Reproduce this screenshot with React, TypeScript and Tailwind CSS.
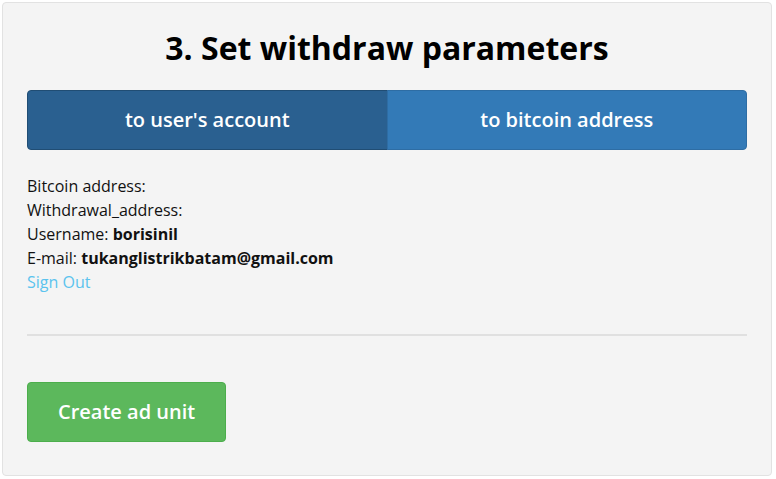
import React, { useState } from 'react';

export default function App() {
  const [mode, setMode] = useState<'account' | 'bitcoin'>('account');

  return (
    <div className="min-h-screen bg-white pl-[2px] pt-[2px] font-['Open_Sans',sans-serif] text-[#111]">
      <div className="w-[770px] h-[474px] bg-[#f4f4f4] border border-[#e2e2e2] rounded-[4px] px-[24px]">
        <h2 className="text-center text-[32px] font-bold text-black leading-none pt-[29px] pb-[26px]">
          3. Set withdraw parameters
        </h2>

        {/* Withdraw mode toggle */}
        <div className="flex h-[60px]">
          <button
            onClick={() => setMode('account')}
            className={
              mode === 'account'
                ? 'flex-1 rounded-l-[4px] bg-[#2a6090] border border-[#204d74] text-white text-[20px] font-semibold'
                : 'flex-1 rounded-l-[4px] bg-[#337ab7] border border-[#2e6da4] text-white text-[20px] font-semibold'
            }
          >
            to user's account
          </button>
          <button
            onClick={() => setMode('bitcoin')}
            className={
              mode === 'bitcoin'
                ? 'flex-1 rounded-r-[4px] bg-[#2a6090] border border-[#204d74] -ml-px text-white text-[20px] font-semibold'
                : 'flex-1 rounded-r-[4px] bg-[#337ab7] border border-[#2e6da4] -ml-px text-white text-[20px] font-semibold'
            }
          >
            to bitcoin address
          </button>
        </div>

        {/* Account info */}
        <div className="pt-[24px] text-[16px] leading-[24px]">
          <p>Bitcoin address:</p>
          <p>Withdrawal_address:</p>
          <p>
            Username: <b className="font-bold">borisinil</b>
          </p>
          <p>
            E-mail: <b className="font-bold">tukanglistrikbatam@gmail.com</b>
          </p>
          <a href="#" className="text-[#5bc3ee]">
            Sign Out
          </a>
        </div>

        <hr className="mt-[40px] border-t-2 border-[#e0e0e0]" />

        <button className="mt-[46px] h-[60px] px-[30px] rounded-[4px] bg-[#5cb85c] border border-[#4cae4c] text-white text-[20px] font-semibold">
          Create ad unit
        </button>
      </div>
    </div>
  );
}
